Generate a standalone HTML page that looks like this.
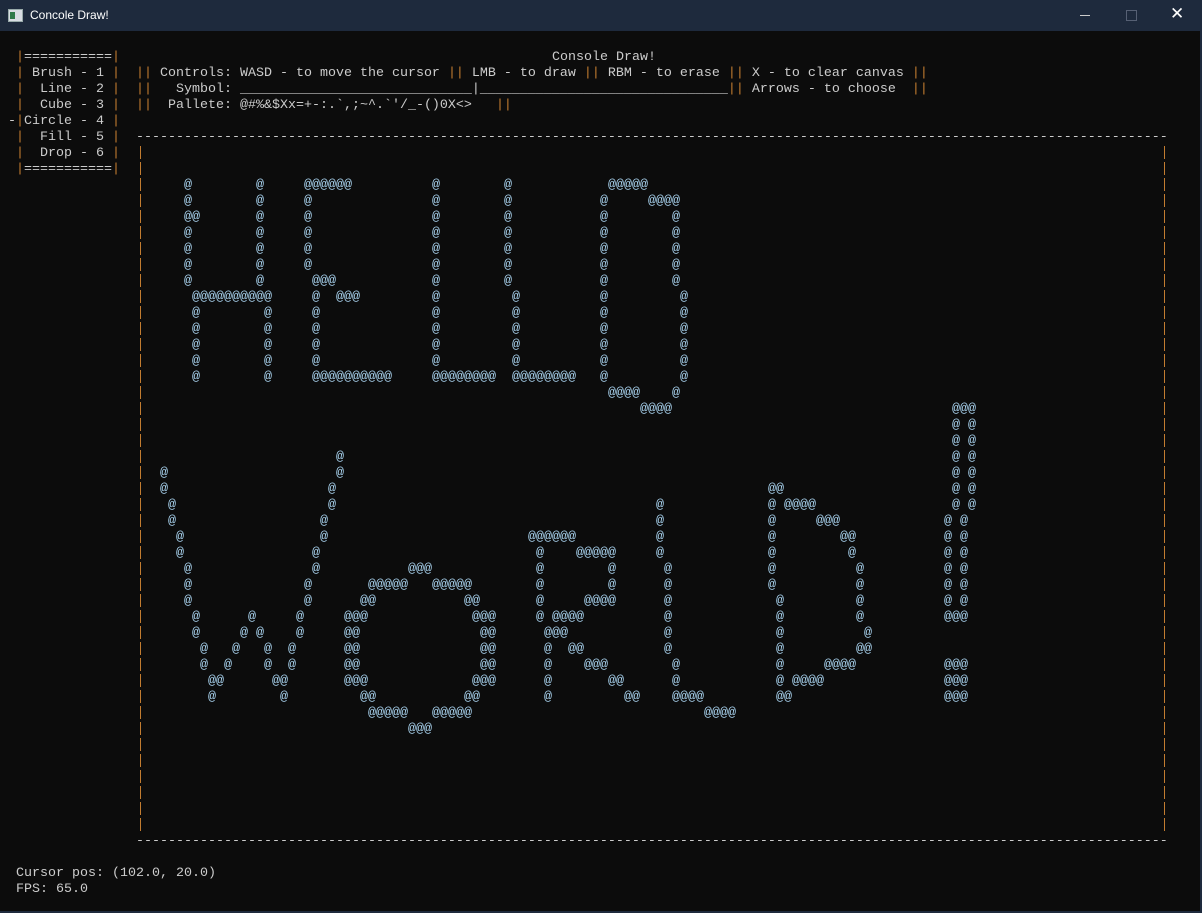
<!DOCTYPE html>
<html><head><meta charset="utf-8">
<style>
html,body{margin:0;padding:0;}
body{width:1202px;height:913px;background:#0c0c0c;position:relative;overflow:hidden;font-family:"Liberation Mono",monospace;font-size:13.33px;color:#cccccc;}
#tb{position:absolute;left:0;top:0;width:1202px;height:31px;background:#1e2a3d;color:#fff;font-family:"Liberation Sans",sans-serif;font-size:12px;z-index:2;}
#tb .t{position:absolute;left:30px;top:8px;}
#tb .ic{position:absolute;left:8px;top:9px;width:13px;height:11px;background:#d8dde3;border:1px solid #9aa;}
#tb .ic:before{content:"";position:absolute;left:1px;top:2px;width:5px;height:7px;background:#2f7a4a;}
.min{position:absolute;left:1080px;top:15px;width:10px;height:1px;background:#ccc;}
.max{position:absolute;left:1126px;top:10px;width:9px;height:9px;border:1px solid #566074;}
.x{position:absolute;left:1170px;top:4px;font-size:17px;color:#fff;font-family:"Liberation Sans",sans-serif;}
#w{position:absolute;left:0;top:2px;width:1202px;height:911px;}
.l{position:absolute;left:0;white-space:pre;line-height:16px;height:16px;}
.r{position:absolute;left:0;width:1202px;height:16px;line-height:16px;}
.r b{position:absolute;font-weight:normal;color:#a9d3ef;white-space:pre;}
.o{color:#c27c30;}
.vb{position:absolute;top:144px;width:1px;height:688px;background:repeating-linear-gradient(to bottom,#c27c30 0 13px,transparent 13px 16px);}
#bot{position:absolute;left:0;top:911px;width:1202px;height:2px;background:#1e2a3d;}
#rb{position:absolute;left:1200px;top:31px;width:2px;height:882px;background:#1e2a3d;}
</style></head><body>
<div id="tb"><div class="ic"></div><div class="t">Concole Draw!</div><div class="min"></div><div class="max"></div><div class="x">✕</div></div>
<div id="w">
<div class="l" style="top:48px;left:16px"><span class="o">|</span>===========<span class="o">|</span></div>
<div class="l" style="top:64px;left:16px"><span class="o">|</span> Brush - 1 <span class="o">|</span></div>
<div class="l" style="top:80px;left:16px"><span class="o">|</span>  Line - 2 <span class="o">|</span></div>
<div class="l" style="top:96px;left:16px"><span class="o">|</span>  Cube - 3 <span class="o">|</span></div>
<div class="l" style="top:112px;left:8px">-<span class="o">|</span>Circle - 4 <span class="o">|</span></div>
<div class="l" style="top:128px;left:16px"><span class="o">|</span>  Fill - 5 <span class="o">|</span></div>
<div class="l" style="top:144px;left:16px"><span class="o">|</span>  Drop - 6 <span class="o">|</span></div>
<div class="l" style="top:160px;left:16px"><span class="o">|</span>===========<span class="o">|</span></div>

<div class="l" style="top:48px;left:552px">Console Draw!</div>
<div class="l" style="top:64px;left:136px"><span class="o">||</span> Controls: WASD - to move the cursor <span class="o">||</span> LMB - to draw <span class="o">||</span> RBM - to erase <span class="o">||</span> X - to clear canvas <span class="o">||</span></div>
<div class="l" style="top:80px;left:136px"><span class="o">||</span>   Symbol: _____________________________|_______________________________<span class="o">||</span> Arrows - to choose  <span class="o">||</span></div>
<div class="l" style="top:96px;left:136px"><span class="o">||</span>  Pallete: @#%&amp;$Xx=+-:.`,;~^.`'/_-()0X&lt;&gt;   <span class="o">||</span></div>

<div class="l" style="top:128px;left:136px">---------------------------------------------------------------------------------------------------------------------------------</div>
<div class="l" style="top:832px;left:136px">---------------------------------------------------------------------------------------------------------------------------------</div>
<div class="vb" style="left:140px"></div>
<div class="vb" style="left:1164px"></div>

<div class="r" style="top:176px"><b style="left:184px">@</b><b style="left:256px">@</b><b style="left:304px">@@@@@@</b><b style="left:432px">@</b><b style="left:504px">@</b><b style="left:608px">@@@@@</b></div>
<div class="r" style="top:192px"><b style="left:184px">@</b><b style="left:256px">@</b><b style="left:304px">@</b><b style="left:432px">@</b><b style="left:504px">@</b><b style="left:600px">@</b><b style="left:648px">@@@@</b></div>
<div class="r" style="top:208px"><b style="left:184px">@@</b><b style="left:256px">@</b><b style="left:304px">@</b><b style="left:432px">@</b><b style="left:504px">@</b><b style="left:600px">@</b><b style="left:672px">@</b></div>
<div class="r" style="top:224px"><b style="left:184px">@</b><b style="left:256px">@</b><b style="left:304px">@</b><b style="left:432px">@</b><b style="left:504px">@</b><b style="left:600px">@</b><b style="left:672px">@</b></div>
<div class="r" style="top:240px"><b style="left:184px">@</b><b style="left:256px">@</b><b style="left:304px">@</b><b style="left:432px">@</b><b style="left:504px">@</b><b style="left:600px">@</b><b style="left:672px">@</b></div>
<div class="r" style="top:256px"><b style="left:184px">@</b><b style="left:256px">@</b><b style="left:304px">@</b><b style="left:432px">@</b><b style="left:504px">@</b><b style="left:600px">@</b><b style="left:672px">@</b></div>
<div class="r" style="top:272px"><b style="left:184px">@</b><b style="left:256px">@</b><b style="left:312px">@@@</b><b style="left:432px">@</b><b style="left:504px">@</b><b style="left:600px">@</b><b style="left:672px">@</b></div>
<div class="r" style="top:288px"><b style="left:192px">@@@@@@@@@@</b><b style="left:312px">@</b><b style="left:336px">@@@</b><b style="left:432px">@</b><b style="left:512px">@</b><b style="left:600px">@</b><b style="left:680px">@</b></div>
<div class="r" style="top:304px"><b style="left:192px">@</b><b style="left:264px">@</b><b style="left:312px">@</b><b style="left:432px">@</b><b style="left:512px">@</b><b style="left:600px">@</b><b style="left:680px">@</b></div>
<div class="r" style="top:320px"><b style="left:192px">@</b><b style="left:264px">@</b><b style="left:312px">@</b><b style="left:432px">@</b><b style="left:512px">@</b><b style="left:600px">@</b><b style="left:680px">@</b></div>
<div class="r" style="top:336px"><b style="left:192px">@</b><b style="left:264px">@</b><b style="left:312px">@</b><b style="left:432px">@</b><b style="left:512px">@</b><b style="left:600px">@</b><b style="left:680px">@</b></div>
<div class="r" style="top:352px"><b style="left:192px">@</b><b style="left:264px">@</b><b style="left:312px">@</b><b style="left:432px">@</b><b style="left:512px">@</b><b style="left:600px">@</b><b style="left:680px">@</b></div>
<div class="r" style="top:368px"><b style="left:192px">@</b><b style="left:264px">@</b><b style="left:312px">@@@@@@@@@@</b><b style="left:432px">@@@@@@@@</b><b style="left:512px">@@@@@@@@</b><b style="left:600px">@</b><b style="left:680px">@</b></div>
<div class="r" style="top:384px"><b style="left:608px">@@@@</b><b style="left:672px">@</b></div>
<div class="r" style="top:400px"><b style="left:640px">@@@@</b><b style="left:952px">@@@</b></div>
<div class="r" style="top:416px"><b style="left:952px">@</b><b style="left:968px">@</b></div>
<div class="r" style="top:432px"><b style="left:952px">@</b><b style="left:968px">@</b></div>
<div class="r" style="top:448px"><b style="left:336px">@</b><b style="left:952px">@</b><b style="left:968px">@</b></div>
<div class="r" style="top:464px"><b style="left:160px">@</b><b style="left:336px">@</b><b style="left:952px">@</b><b style="left:968px">@</b></div>
<div class="r" style="top:480px"><b style="left:160px">@</b><b style="left:328px">@</b><b style="left:768px">@@</b><b style="left:952px">@</b><b style="left:968px">@</b></div>
<div class="r" style="top:496px"><b style="left:168px">@</b><b style="left:328px">@</b><b style="left:656px">@</b><b style="left:768px">@</b><b style="left:784px">@@@@</b><b style="left:952px">@</b><b style="left:968px">@</b></div>
<div class="r" style="top:512px"><b style="left:168px">@</b><b style="left:320px">@</b><b style="left:656px">@</b><b style="left:768px">@</b><b style="left:816px">@@@</b><b style="left:944px">@</b><b style="left:960px">@</b></div>
<div class="r" style="top:528px"><b style="left:176px">@</b><b style="left:320px">@</b><b style="left:528px">@@@@@@</b><b style="left:656px">@</b><b style="left:768px">@</b><b style="left:840px">@@</b><b style="left:944px">@</b><b style="left:960px">@</b></div>
<div class="r" style="top:544px"><b style="left:176px">@</b><b style="left:312px">@</b><b style="left:536px">@</b><b style="left:576px">@@@@@</b><b style="left:656px">@</b><b style="left:768px">@</b><b style="left:848px">@</b><b style="left:944px">@</b><b style="left:960px">@</b></div>
<div class="r" style="top:560px"><b style="left:184px">@</b><b style="left:312px">@</b><b style="left:408px">@@@</b><b style="left:536px">@</b><b style="left:608px">@</b><b style="left:664px">@</b><b style="left:768px">@</b><b style="left:856px">@</b><b style="left:944px">@</b><b style="left:960px">@</b></div>
<div class="r" style="top:576px"><b style="left:184px">@</b><b style="left:304px">@</b><b style="left:368px">@@@@@</b><b style="left:432px">@@@@@</b><b style="left:536px">@</b><b style="left:608px">@</b><b style="left:664px">@</b><b style="left:768px">@</b><b style="left:856px">@</b><b style="left:944px">@</b><b style="left:960px">@</b></div>
<div class="r" style="top:592px"><b style="left:184px">@</b><b style="left:304px">@</b><b style="left:360px">@@</b><b style="left:464px">@@</b><b style="left:536px">@</b><b style="left:584px">@@@@</b><b style="left:664px">@</b><b style="left:776px">@</b><b style="left:856px">@</b><b style="left:944px">@</b><b style="left:960px">@</b></div>
<div class="r" style="top:608px"><b style="left:192px">@</b><b style="left:248px">@</b><b style="left:296px">@</b><b style="left:344px">@@@</b><b style="left:472px">@@@</b><b style="left:536px">@</b><b style="left:552px">@@@@</b><b style="left:664px">@</b><b style="left:776px">@</b><b style="left:856px">@</b><b style="left:944px">@@@</b></div>
<div class="r" style="top:624px"><b style="left:192px">@</b><b style="left:240px">@</b><b style="left:256px">@</b><b style="left:296px">@</b><b style="left:344px">@@</b><b style="left:480px">@@</b><b style="left:544px">@@@</b><b style="left:664px">@</b><b style="left:776px">@</b><b style="left:864px">@</b></div>
<div class="r" style="top:640px"><b style="left:200px">@</b><b style="left:232px">@</b><b style="left:264px">@</b><b style="left:288px">@</b><b style="left:344px">@@</b><b style="left:480px">@@</b><b style="left:544px">@</b><b style="left:568px">@@</b><b style="left:664px">@</b><b style="left:776px">@</b><b style="left:856px">@@</b></div>
<div class="r" style="top:656px"><b style="left:200px">@</b><b style="left:224px">@</b><b style="left:264px">@</b><b style="left:288px">@</b><b style="left:344px">@@</b><b style="left:480px">@@</b><b style="left:544px">@</b><b style="left:584px">@@@</b><b style="left:672px">@</b><b style="left:776px">@</b><b style="left:824px">@@@@</b><b style="left:944px">@@@</b></div>
<div class="r" style="top:672px"><b style="left:208px">@@</b><b style="left:272px">@@</b><b style="left:344px">@@@</b><b style="left:472px">@@@</b><b style="left:544px">@</b><b style="left:608px">@@</b><b style="left:672px">@</b><b style="left:776px">@</b><b style="left:792px">@@@@</b><b style="left:944px">@@@</b></div>
<div class="r" style="top:688px"><b style="left:208px">@</b><b style="left:280px">@</b><b style="left:360px">@@</b><b style="left:464px">@@</b><b style="left:544px">@</b><b style="left:624px">@@</b><b style="left:672px">@@@@</b><b style="left:776px">@@</b><b style="left:944px">@@@</b></div>
<div class="r" style="top:704px"><b style="left:368px">@@@@@</b><b style="left:432px">@@@@@</b><b style="left:704px">@@@@</b></div>
<div class="r" style="top:720px"><b style="left:408px">@@@</b></div>

<div class="l" style="top:864px;left:16px">Cursor pos: (102.0, 20.0)</div>
<div class="l" style="top:880px;left:16px">FPS: 65.0</div>
</div>
<div id="rb"></div><div id="bot"></div>
</body></html>
